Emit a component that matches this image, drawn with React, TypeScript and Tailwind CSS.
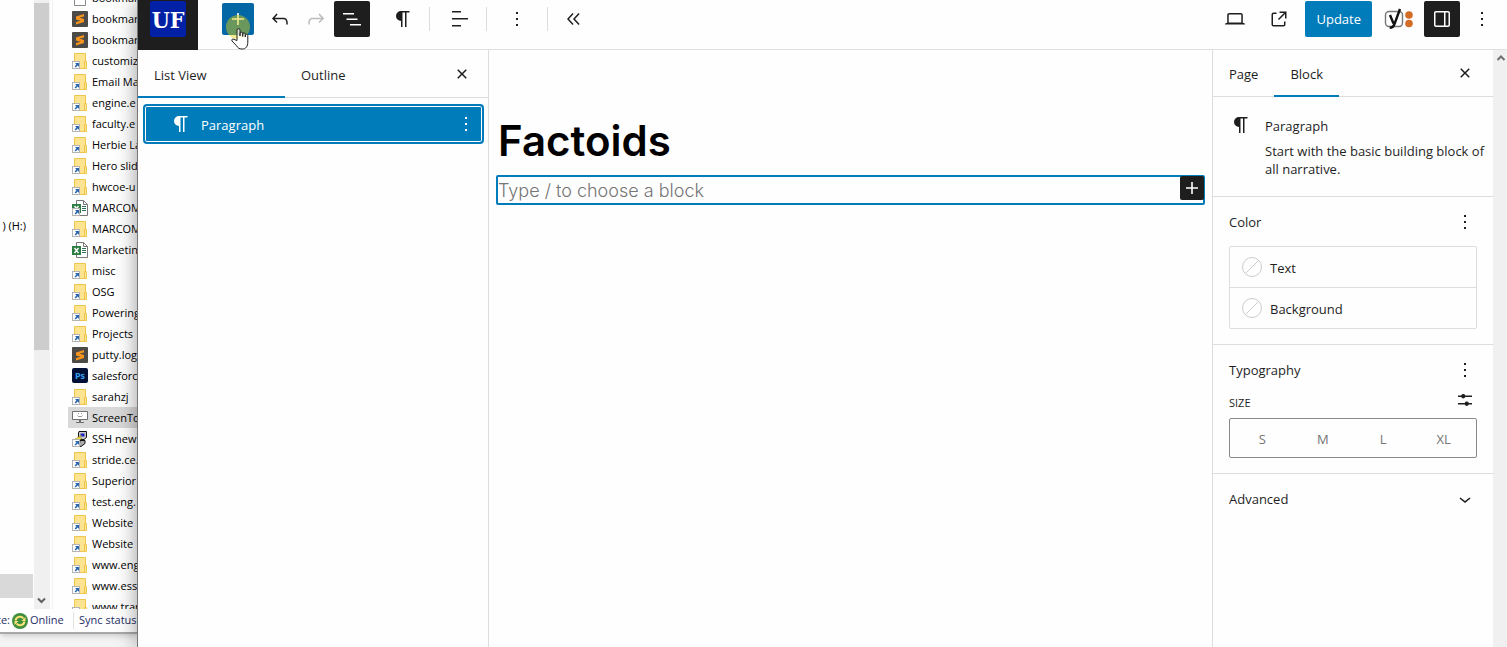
import { useState, type ReactNode } from 'react';

type FileKind = 'doc' | 'sublime' | 'folder' | 'excelLink' | 'excel' | 'photoshop' | 'screen' | 'putty';

interface FileItem {
  name: string;
  kind: FileKind;
}

const files: FileItem[] = [
  { name: 'bookmarks', kind: 'doc' },
  { name: 'bookmarks', kind: 'sublime' },
  { name: 'bookmarks', kind: 'sublime' },
  { name: 'customize', kind: 'folder' },
  { name: 'Email Mar', kind: 'folder' },
  { name: 'engine.e', kind: 'folder' },
  { name: 'faculty.e', kind: 'folder' },
  { name: 'Herbie La', kind: 'folder' },
  { name: 'Hero slid', kind: 'folder' },
  { name: 'hwcoe-u', kind: 'folder' },
  { name: 'MARCOM', kind: 'excelLink' },
  { name: 'MARCOM', kind: 'folder' },
  { name: 'Marketin', kind: 'excel' },
  { name: 'misc', kind: 'folder' },
  { name: 'OSG', kind: 'folder' },
  { name: 'Powering', kind: 'folder' },
  { name: 'Projects', kind: 'folder' },
  { name: 'putty.log', kind: 'sublime' },
  { name: 'salesforc', kind: 'photoshop' },
  { name: 'sarahzj', kind: 'folder' },
  { name: 'ScreenTo', kind: 'screen' },
  { name: 'SSH new', kind: 'putty' },
  { name: 'stride.ce.', kind: 'folder' },
  { name: 'Superior', kind: 'folder' },
  { name: 'test.eng.', kind: 'folder' },
  { name: 'Website', kind: 'folder' },
  { name: 'Website', kind: 'folder' },
  { name: 'www.eng', kind: 'folder' },
  { name: 'www.ess', kind: 'folder' },
  { name: 'www.trar', kind: 'folder' },
];

const icons = {
  plus: 'M18 11.2h-5.2V6h-1.6v5.2H6v1.6h5.2V18h1.6v-5.2H18z',
  undo: 'M18.3 11.7c-.6-.6-1.4-.9-2.3-.9H6.7l2.9-3.3-1.1-1-4.5 5L8.5 16l1-1-2.7-2.7H16c.5 0 .9.2 1.3.5 1 1 1 3.4 1 4.5v.3h1.5v-.2c0-1.5 0-4.3-1.5-5.7z',
  redo: 'M15.6 6.5l-1.1 1 2.9 3.3H8c-.9 0-1.7.3-2.3.9-1.4 1.5-1.4 4.2-1.4 5.6v.2h1.5v-.3c0-1.1 0-3.5 1-4.5.3-.3.7-.5 1.3-.5h9.2L14.5 15l1.1 1.1 4.6-4.6-4.6-5z',
  listView: 'M3 6h11v1.5H3V6zm3.5 5.5h11V13h-11v-1.5zM21 17H10v1.5h11V17z',
  paragraph: 'M10 14v6h1.5V5.5H14V20h1.5V5.5h3V4H10a5 5 0 0 0 0 10z',
  alignLeft: 'M13 5.5H4V4h9v1.5zm7 7H4V11h16v1.5zm-7 7H4V18h9v1.5z',
  more: 'M13 19h-2v-2h2v2zm0-6h-2v-2h2v2zm0-6h-2V5h2v2z',
  close: 'M12 13.06l3.712 3.713 1.061-1.06L13.061 12l3.712-3.712-1.06-1.06L12 10.938 8.288 7.227l-1.061 1.06L10.939 12l-3.712 3.712 1.06 1.061L12 13.061z',
  collapse: 'M11.6 7l-1.1-1L5 12l5.5 6 1.1-1L7 12l4.6-5zm6 0l-1.1-1L11 12l5.5 6 1.1-1L13 12l4.6-5z',
  laptop: 'M20.5 16h-.7V8c0-1.1-.9-2-2-2H6.2c-1.1 0-2 .9-2 2v8h-.7c-.8 0-1.5.7-1.5 1.5h20c0-.8-.7-1.5-1.5-1.5zM5.7 8c0-.3.2-.5.5-.5h11.6c.3 0 .5.2.5.5v7.6H5.7V8z',
  external: 'M19.5 4.5h-7V6h4.44l-5.97 5.97 1.06 1.06L18 7.06v4.44h1.5v-7zm-13 1a2 2 0 0 0-2 2v10a2 2 0 0 0 2 2h10a2 2 0 0 0 2-2v-3H17v3a.5.5 0 0 1-.5.5h-10a.5.5 0 0 1-.5-.5v-10a.5.5 0 0 1 .5-.5h3V5.5h-3z',
  drawer: 'M18 4H6c-1.1 0-2 .9-2 2v12c0 1.1.9 2 2 2h12c1.1 0 2-.9 2-2V6c0-1.1-.9-2-2-2zm-4 14.5H6c-.3 0-.5-.2-.5-.5V6c0-.3.2-.5.5-.5h8v13zm4.5-.5c0 .3-.2.5-.5.5h-2.5v-13H18c.3 0 .5.2.5.5v12z',
  chevronDown: 'M17.5 11.6L12 16l-5.5-4.4.9-1.2L12 14l4.5-3.6 1 1.2z',
  sliders: 'M5 7.5h3.2a2.2 2.2 0 0 1 4.1 0H19V9h-6.7a2.2 2.2 0 0 1-4.1 0H5V7.5zm0 7.5h6.7a2.2 2.2 0 0 1 4.1 0H19v1.5h-3.2a2.2 2.2 0 0 1-4.1 0H5V15z',
};

function Icon({ name }: { name: keyof typeof icons }) {
  return (
    <svg viewBox="0 0 24 24" fill="currentColor" className="size-6 shrink-0" aria-hidden="true">
      <path d={icons[name]} />
    </svg>
  );
}

function ToolButton({
  icon,
  label,
  className = '',
}: {
  icon: keyof typeof icons;
  label: string;
  className?: string;
}) {
  return (
    <button
      type="button"
      aria-label={label}
      className={`flex size-9 shrink-0 items-center justify-center rounded-xs ${className}`}
    >
      <Icon name={icon} />
    </button>
  );
}

function ShortcutArrow() {
  return (
    <>
      <rect x="0.5" y="8.5" width="7" height="7" fill="#fff" stroke="#b4b4b4" />
      <path d="M3 10h4v4l-1.4-1.4-1.8 2-1.2-1.2 1.8-2z" fill="#2a67ad" />
    </>
  );
}

function FileIcon({ kind }: { kind: FileKind }) {
  return (
    <svg viewBox="0 0 16 16" className="size-4 shrink-0" aria-hidden="true">
      {kind === 'folder' && (
        <>
          <path d="M2.5 .5h11v15h-11z" fill="#fee391" stroke="#eec54d" />
          <path d="M12.5 8.5h2v7h-2z" fill="#fee391" stroke="#eec54d" />
          <ShortcutArrow />
        </>
      )}
      {kind === 'doc' && <path d="M2.5 .5h11v15h-11z" fill="#fff" stroke="#8a8a8a" />}
      {kind === 'sublime' && (
        <>
          <rect width="16" height="16" rx="1" fill="#4b4a46" />
          <path d="M12 3L4 5.5v3l4.5 1.3L4 11v2.5l8-2.5V8L7.5 6.6 12 5.5z" fill="#f7941e" />
        </>
      )}
      {(kind === 'excel' || kind === 'excelLink') && (
        <>
          <path d="M4.5 .5h7l4 4v11h-11z" fill="#fff" stroke="#777" />
          <path d="M11.5 .5v4h4" fill="none" stroke="#777" />
          <path d="M10 6.5h4M10 8.5h4M10 10.5h4" stroke="#2f6f55" />
          <rect y="4" width="9" height="9" fill="#2d7d43" />
          <path d="M2.5 6l4 5M6.5 6l-4 5" stroke="#fff" strokeWidth="1.4" />
          {kind === 'excelLink' && <ShortcutArrow />}
        </>
      )}
      {kind === 'photoshop' && (
        <>
          <rect width="16" height="15" rx="2" fill="#001034" />
          <text x="8" y="11" textAnchor="middle" fontSize="9" fontWeight="700" fontFamily="Open Sans, sans-serif" fill="#31a0f5">
            Ps
          </text>
        </>
      )}
      {kind === 'screen' && (
        <>
          <path d="M.5 1.5h15v8H.5z" fill="#fff" stroke="#6f6f6f" />
          <path d="M7 10h2v2h3v1H4v-1h3z" fill="#6f6f6f" />
          <path d="M6 3.5h1M9 3.5h1M5.5 5.5l1 1h3l1-1" fill="none" stroke="#777" strokeWidth=".8" />
        </>
      )}
      {kind === 'putty' && (
        <>
          <path d="M7 .5h7.5v6L12 8.5H6.5V2z" fill="#c9c9c9" stroke="#111" />
          <path d="M8.5 2.5h4v3h-4z" fill="#1b1fc4" />
          <path d="M8 9.5h5v3l-4 3H7z" fill="#aaa" stroke="#111" />
          <path d="M10 4L3 8l3 .5L3.5 12 10 7.5 7.5 7z" fill="#f5dc3c" stroke="#8b7a12" strokeWidth=".4" />
          <ShortcutArrow />
        </>
      )}
    </svg>
  );
}

function Explorer() {
  return (
    <div className="flex w-[137px] shrink-0 flex-col bg-[#f4f4f4] text-[11px] text-black">
      <div className="flex h-[609px] shrink-0 bg-[#fefefe]">
        {/* Navigation pane */}
        <div className="flex w-[34px] shrink-0 flex-col justify-between overflow-hidden pt-[216px] pb-[11px]">
          <div className="flex h-5 w-[26px] items-center justify-end whitespace-nowrap">) (H:)</div>
          <div className="h-6 w-[33px] bg-[#d9d9d9]" />
        </div>
        <div className="flex w-4 shrink-0 flex-col justify-between bg-[#f0f0f0] pt-[3px] pb-1">
          <div className="h-[347px] w-[15px] bg-[#cdcdcd]" />
          <svg viewBox="0 0 16 8" className="h-2 w-4" aria-hidden="true">
            <path d="M4 1.5L7.5 5 11 1.5" fill="none" stroke="#606060" strokeWidth="2" />
          </svg>
        </div>
        {/* File list */}
        <ul className="ml-0.5 flex min-w-0 flex-1 flex-col justify-end overflow-hidden border-l border-[#f0f0f0] pl-[15px]">
          {files.map((file, index) => (
            <li
              key={index}
              className={`flex h-[21px] shrink-0 items-center gap-1 pl-1 whitespace-nowrap last:-mb-2 ${
                file.kind === 'screen' ? 'bg-[#d9d9d9]' : ''
              }`}
            >
              <FileIcon kind={file.kind} />
              <span className="pt-0.5">{file.name}</span>
            </li>
          ))}
        </ul>
      </div>
      <div className="flex h-[25px] shrink-0 items-center overflow-hidden border-b-2 border-[#a8a8a8] bg-[#fefefe] whitespace-nowrap text-[#1e2f66] shadow-md">
        <span className="flex w-3 shrink-0 justify-end pr-0.5">ce:</span>
        <svg viewBox="0 0 16 16" className="mr-0.5 size-4 shrink-0" aria-hidden="true">
          <circle cx="8" cy="8" r="8" fill="#3f8f3f" />
          <path d="M3.5 7.5a4.5 4.5 0 0 1 8-2M12.5 8.5a4.5 4.5 0 0 1-8 2" fill="none" stroke="#ffe27a" strokeWidth="2" />
          <path d="M13.5 4v4h-4zM2.5 12V8h4z" fill="#ffe27a" />
        </svg>
        <span className="w-11 shrink-0 border-r border-[#e2e2e2]">Online</span>
        <span className="pl-[5px]">Sync status</span>
      </div>
    </div>
  );
}

function Separator() {
  return <div className="h-6 w-px shrink-0 bg-[#ddd]" />;
}

function Header() {
  return (
    <header className="flex h-[50px] shrink-0 border-b border-[#e0e0e0]">
      <div className="-mb-px flex w-[60px] shrink-0 items-center justify-center bg-[#1e1e1e] pb-3">
        <a
          href="#"
          className="flex size-9 items-center justify-center rounded-xs bg-[#0021a5] text-[23px] leading-none font-bold text-white [font-family:'DejaVu_Serif_Condensed','DejaVu_Serif',serif]"
        >
          UF
        </a>
      </div>

      <div className="flex min-w-0 flex-1 items-center justify-between pr-[7px] pb-[11px] pl-6">
        <div className="flex items-center">
          <div className="relative mr-2">
            <button
              type="button"
              aria-label="Toggle block inserter"
              className="flex size-8 items-center justify-center rounded-xs bg-[#0367a6] text-white"
            >
              <Icon name="plus" />
            </button>
            {/* Click highlight and pointer */}
            <div className="pointer-events-none absolute top-3 left-1 size-6 rounded-full bg-[#e8d000]/45" />
            <svg viewBox="0 0 20 24" className="pointer-events-none absolute top-6 left-2 h-6 w-5" aria-hidden="true">
              <path
                d="M7 13.5V3.2a1.5 1.5 0 0 1 3 0V9V6.5a1.3 1.3 0 0 1 2.7 0V9.5V7.2a1.3 1.3 0 0 1 2.6 0V10V8.5a1.2 1.2 0 0 1 2.5 0V15c0 4.5-2 7-5.5 7-3 0-4.5-1-6-3.5L2 14c-.8-1.5.8-2.6 2-1.6z"
                fill="#fff"
                fillOpacity=".75"
                stroke="#222"
              />
            </svg>
          </div>
          <ToolButton icon="undo" label="Undo" />
          <ToolButton icon="redo" label="Redo" className="text-[#bbb]" />
          <ToolButton icon="listView" label="Document overview" className="bg-[#1e1e1e] text-white" />
          <ToolButton icon="paragraph" label="Paragraph" className="mr-2 ml-[15px]" />
          <Separator />
          <ToolButton icon="alignLeft" label="Align text" className="mr-2 ml-3" />
          <Separator />
          <ToolButton icon="more" label="Options" className="mx-3" />
          <Separator />
          <ToolButton icon="collapse" label="Hide block tools" className="ml-2" />
        </div>

        <div className="flex items-center gap-2">
          <ToolButton icon="laptop" label="View" />
          <ToolButton icon="external" label="View page" />
          <button type="button" className="h-9 rounded-xs bg-[#007cba] px-[11px] pt-0.5 text-white">
            Update
          </button>
          <button type="button" aria-label="Yoast SEO" className="flex size-9 items-center justify-center">
            <svg viewBox="0 0 30 24" className="h-6 w-[30px]" aria-hidden="true">
              <rect x="2.5" y="4.5" width="17" height="15" rx="3.5" fill="#fff" stroke="#777" strokeWidth="1.4" />
              <path d="M7 8l3.5 8.5M17 2l-5.5 15c-1 2.8-2.4 3.8-4.8 3.8" fill="none" stroke="#111" strokeWidth="2.4" />
              <circle cx="26" cy="8" r="3.8" fill="#d36c26" />
              <circle cx="26" cy="16.5" r="3.8" fill="#d36c26" />
            </svg>
          </button>
          <div className="flex gap-1">
            <ToolButton icon="drawer" label="Settings" className="bg-[#1e1e1e] text-white" />
            <ToolButton icon="more" label="Options" />
          </div>
        </div>
      </div>
    </header>
  );
}

function ListViewPanel() {
  return (
    <aside className="w-[351px] shrink-0 border-r border-[#ddd]">
      <div className="flex h-12 items-center border-b border-[#ddd]">
        <button type="button" className="-mb-px h-12 w-[147px] border-b-2 border-[#007cba] px-4 pt-1.5 text-left">
          List View
        </button>
        <button type="button" className="-mb-px h-12 border-b-2 border-transparent px-4 pt-1.5 text-left">
          Outline
        </button>
        <ToolButton icon="close" label="Close" className="mr-2 ml-auto" />
      </div>
      <div className="flex flex-col py-1.5 pr-1 pl-[5px]">
        <div className="flex h-10 items-center rounded-sm border-2 border-[#007cba] bg-[#007cba] pr-1 pl-6 text-white inset-ring inset-ring-white">
          <a href="#" className="flex flex-1 items-center gap-2">
            <Icon name="paragraph" />
            <span className="pt-1">Paragraph</span>
          </a>
          <button type="button" aria-label="Options for Paragraph" className="flex size-6 items-center justify-center">
            <Icon name="more" />
          </button>
        </div>
      </div>
    </aside>
  );
}

function Editor() {
  const [text, setText] = useState('');

  return (
    <main className="min-w-0 flex-1 px-[7px] pt-[65px] [font-family:Inter,sans-serif]">
      <h1 className="mb-2 pl-0.5 text-[42px] leading-[52px] font-semibold text-black">Factoids</h1>
      <div className="flex h-[30px] rounded-xs border-2 border-[#007cba]">
        <input
          type="text"
          value={text}
          onChange={(e) => setText(e.target.value)}
          aria-label="Empty block"
          placeholder="Type / to choose a block"
          className="min-w-0 flex-1 pt-0.5 text-lg font-light outline-none placeholder:text-[#757575]"
        />
        <button
          type="button"
          aria-label="Add block"
          className="-mt-px -mr-px flex size-6 items-center justify-center rounded-xs bg-[#1e1e1e] text-white"
        >
          <Icon name="plus" />
        </button>
      </div>
    </main>
  );
}

function PanelHeading({ title, children }: { title: string; children: ReactNode }) {
  return (
    <div className="flex items-center justify-between">
      <h2 className="pt-0.5">{title}</h2>
      {children}
    </div>
  );
}

function Settings() {
  const sizes = ['S', 'M', 'L', 'XL'];

  return (
    <aside className="w-[281px] shrink-0 border-l border-[#ddd]">
      <div className="flex h-[47px] items-center border-b border-[#ddd]">
        <button type="button" className="h-[47px] border-b-2 border-transparent px-4 pt-1.5">
          Page
        </button>
        <button type="button" className="h-[47px] border-b-2 border-[#007cba] px-4 pt-1.5">
          Block
        </button>
        <ToolButton icon="close" label="Close settings" className="mr-2.5 ml-auto" />
      </div>

      <section className="flex gap-3 border-b border-[#ddd] py-4 pr-2 pl-4">
        <Icon name="paragraph" />
        <div>
          <h2 className="mb-[7px] pt-1 leading-[18px]">Paragraph</h2>
          <p className="pb-0.5 leading-[18px]">Start with the basic building block of all narrative.</p>
        </div>
      </section>

      <section className="border-b border-[#ddd] px-4 pt-[13px] pb-[15px]">
        <PanelHeading title="Color">
          <button type="button" aria-label="Color options">
            <Icon name="more" />
          </button>
        </PanelHeading>
        <ul className="mt-3 divide-y divide-[#ddd] rounded-xs border border-[#ddd]">
          {['Text', 'Background'].map((label) => (
            <li key={label}>
              <button type="button" className="flex h-10 w-full items-center gap-2 px-3">
                <svg viewBox="0 0 20 20" className="size-5" aria-hidden="true">
                  <circle cx="10" cy="10" r="9.5" fill="none" stroke="#ccc" />
                  <path d="M3.5 16.5l13-13" stroke="#ccc" />
                </svg>
                <span className="pt-1">{label}</span>
              </button>
            </li>
          ))}
        </ul>
      </section>

      <section className="border-b border-[#ddd] px-4 pt-[13px] pb-[15px]">
        <PanelHeading title="Typography">
          <button type="button" aria-label="Typography options">
            <Icon name="more" />
          </button>
        </PanelHeading>
        <div className="my-1.5 flex items-center justify-between">
          <h3 className="pt-1.5 text-[11px]">SIZE</h3>
          <button type="button" aria-label="Set custom size">
            <Icon name="sliders" />
          </button>
        </div>
        <div className="grid h-10 grid-cols-4 rounded-xs border border-[#8a8a8a] px-0.5 text-[#757575]">
          {sizes.map((size) => (
            <button key={size} type="button" className="pt-1">
              {size}
            </button>
          ))}
        </div>
      </section>

      <section className="px-4 pt-[13px]">
        <PanelHeading title="Advanced">
          <button type="button" aria-label="Expand advanced">
            <Icon name="chevronDown" />
          </button>
        </PanelHeading>
      </section>
    </aside>
  );
}

export default function App() {
  return (
    <div className="flex h-screen overflow-hidden bg-[#fefefe] [font-family:'Open_Sans',sans-serif]">
      <Explorer />
      <div className="relative flex min-w-0 flex-1 flex-col border-l border-[#777] bg-[#fefefe] text-[13px] text-[#1e1e1e] shadow-[0_0_20px_rgba(0,0,0,0.4)]">
        <Header />
        <div className="flex min-h-0 flex-1">
          <ListViewPanel />
          <Editor />
          <Settings />
          {/* Page scrollbar */}
          <div className="w-3.5 shrink-0 bg-[#f0f0f0] pt-1">
            <svg viewBox="0 0 14 8" className="h-2 w-3.5" aria-hidden="true">
              <path d="M4.5 6L8 2.5 11.5 6" fill="none" stroke="#707070" strokeWidth="2" />
            </svg>
          </div>
        </div>
      </div>
    </div>
  );
}
